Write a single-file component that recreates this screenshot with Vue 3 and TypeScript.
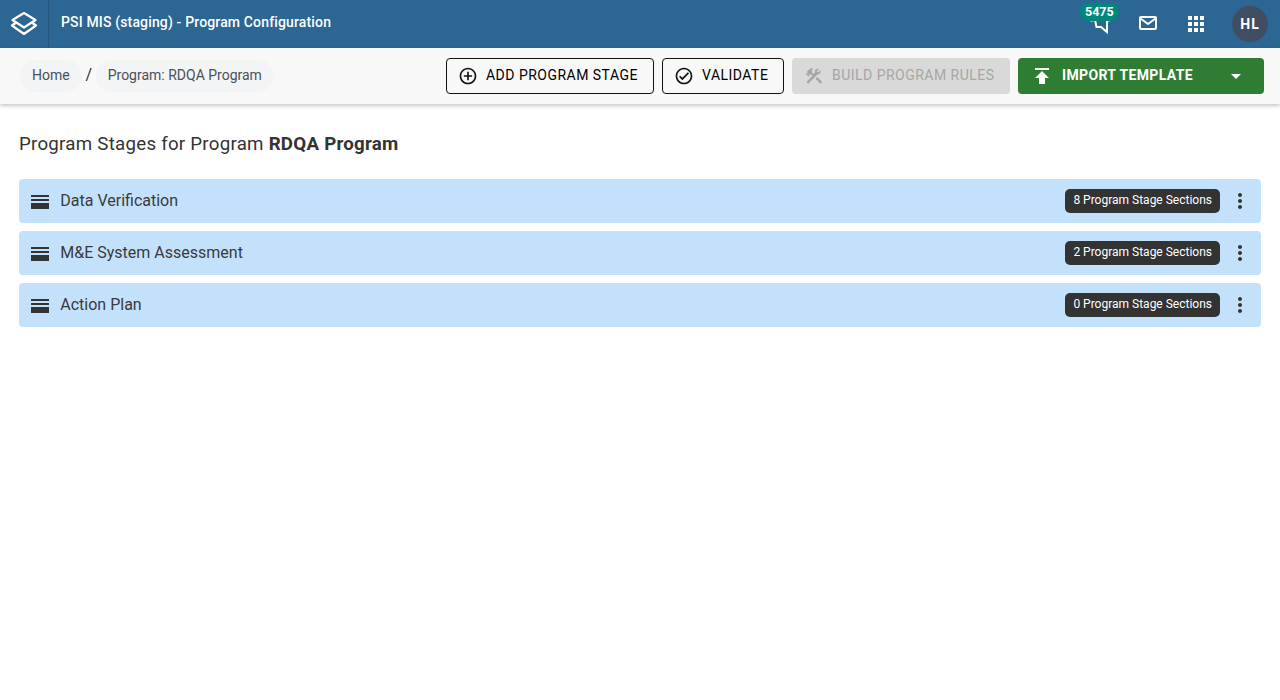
<script setup lang="ts">
const stages = [
  { name: 'Data Verification', count: 8 },
  { name: 'M&E System Assessment', count: 2 },
  { name: 'Action Plan', count: 0 },
]
</script>

<template>
  <div class="page">
    <header class="topbar">
      <div class="logo">
        <svg width="28" height="26" viewBox="0 0 28 26" fill="none" stroke="#fff" stroke-width="2.2" stroke-linejoin="round" stroke-linecap="round">
          <path d="M14 2 L25.500 9 L14 16.500 L2.500 9 Z" />
          <path d="M5.500 12 L2 14.500 L14 23 L26 14.500 L22.500 12" />
        </svg>
      </div>
      <div class="title">PSI MIS (staging) - Program Configuration</div>
      <div class="top-actions">
        <div class="chat">
          <svg class="chat-icon" width="24" height="24" viewBox="0 0 24 24" fill="none" stroke="#fff" stroke-width="2">
            <path d="M2.500 8.500 L5 8.500 M7 8 L8.500 15 L13 15 L19 20 L19 9 L22 8" />
          </svg>
          <span class="badge">5475</span>
        </div>
        <svg class="mail" width="24" height="24" viewBox="0 0 24 24" fill="none" stroke="#fff" stroke-width="2" stroke-linejoin="round">
          <rect x="4" y="6" width="16" height="12" rx="1" />
          <path d="M4.500 7.500 L12 13 L19.500 7.500" />
        </svg>
        <svg class="apps" width="24" height="24" viewBox="0 0 24 24" fill="#fff">
          <path d="M4 8h4V4H4v4zm6 12h4v-4h-4v4zm-6 0h4v-4H4v4zm0-6h4v-4H4v4zm6 0h4v-4h-4v4zm6-10v4h4V4h-4zm-6 4h4V4h-4v4zm6 6h4v-4h-4v4zm0 6h4v-4h-4v4z" />
        </svg>
        <div class="avatar">HL</div>
      </div>
    </header>

    <div class="toolbar">
      <nav class="crumbs">
        <span class="chip">Home</span>
        <span class="sep">/</span>
        <span class="chip">Program: RDQA Program</span>
      </nav>
      <div class="buttons">
        <button class="btn outline add">
          <svg width="20" height="20" viewBox="0 0 24 24" fill="#111">
            <path d="M13 7h-2v4H7v2h4v4h2v-4h4v-2h-4V7zm-1-5C6.480 2 2 6.480 2 12s4.480 10 10 10 10-4.480 10-10S17.520 2 12 2zm0 18c-4.410 0-8-3.590-8-8s3.590-8 8-8 8 3.590 8 8-3.590 8-8 8z" />
          </svg>
          <span class="label">ADD PROGRAM STAGE</span>
        </button>
        <button class="btn outline validate">
          <svg width="20" height="20" viewBox="0 0 24 24" fill="#111">
            <path d="M12 2C6.480 2 2 6.480 2 12s4.480 10 10 10 10-4.480 10-10S17.520 2 12 2zm0 18c-4.410 0-8-3.590-8-8s3.590-8 8-8 8 3.590 8 8-3.590 8-8 8zm4.590-12.420L10 14.170l-2.590-2.580L6 13l4 4 8-8-1.410-1.420z" />
          </svg>
          <span class="label">VALIDATE</span>
        </button>
        <button class="btn disabled" disabled>
          <svg width="20" height="20" viewBox="0 0 24 24" fill="#a6a6a6">
            <path d="M13.780 15.300l6 6 2.110-2.160-6-6-2.110 2.160zm3.720-5.200c-.39 0-.81-.05-1.130-.18L4.970 21.300l-2.110-2.110 7.410-7.400-1.770-1.780-.72.710-1.450-1.420v2.860l-.7.710-3.540-3.540.71-.7h2.810L3.220 7.230l3.550-3.550c1.170-1.170 3.050-1.170 4.220 0L8.870 5.800l1.410 1.410-.71.710 1.770 1.770 1.800-1.850c-.13-.32-.18-.74-.18-1.110 0-1.950 1.580-3.530 3.530-3.530.59 0 1.110.14 1.580.37l-2.680 2.680 1.500 1.500 2.680-2.680c.23.47.37 1 .37 1.560 0 1.950-1.580 3.530-3.530 3.530z" />
          </svg>
          <span class="label">BUILD PROGRAM RULES</span>
        </button>
        <button class="btn import">
          <svg width="24" height="24" viewBox="0 0 24 24" fill="#fff">
            <path d="M5 4v2h14V4H5zm0 10h4v6h6v-6h4l-7-7-7 7z" />
          </svg>
          <span class="import-label">IMPORT TEMPLATE</span>
          <svg class="caret" width="24" height="24" viewBox="0 0 24 24" fill="#fff">
            <path d="M7 10l5 5 5-5z" />
          </svg>
        </button>
      </div>
    </div>

    <main class="content">
      <h1 class="heading">Program Stages for Program <strong>RDQA Program</strong></h1>
      <ul class="list">
        <li v-for="s in stages" :key="s.name" class="row">
          <svg class="drag" width="18" height="14" viewBox="0 0 18 14" fill="#333">
            <rect x="0" y="0" width="18" height="2" />
            <rect x="0" y="4" width="18" height="2" />
            <rect x="0" y="8" width="18" height="6" />
          </svg>
          <span class="name">{{ s.name }}</span>
          <span class="count">{{ s.count }} Program Stage Sections</span>
          <svg class="more" width="24" height="24" viewBox="0 0 24 24" fill="#333">
            <path d="M12 8c1.100 0 2-.9 2-2s-.9-2-2-2-2 .9-2 2 .9 2 2 2zm0 2c-1.100 0-2 .9-2 2s.9 2 2 2 2-.9 2-2-.9-2-2-2zm0 6c-1.100 0-2 .9-2 2s.9 2 2 2 2-.9 2-2-.9-2-2-2z" />
          </svg>
        </li>
      </ul>
    </main>
  </div>
</template>

<style>
html, body { margin: 0; background: #fff; }
</style>

<style scoped>
.page {
  width: 1280px;
  height: 700px;
  overflow: hidden;
  font-family: Roboto, "Liberation Sans", sans-serif;
  color: #333;
  background: #fff;
}
.topbar {
  height: 48px;
  background: #2c6693;
  display: flex;
  align-items: center;
  color: #fff;
}
.logo {
  width: 49px;
  height: 48px;
  box-sizing: border-box;
  border-right: 1px solid #24557b;
  display: flex;
  align-items: center;
  justify-content: center;
}
.title {
  margin-left: 12px;
  font-size: 14px;
  font-weight: 500;
  letter-spacing: 0.15px;
  margin-top: -4px;
}
.top-actions {
  margin-left: auto;
  display: flex;
  align-items: center;
  padding-right: 12px;
}
.chat {
  position: relative;
  width: 24px;
  height: 24px;
}
.chat-icon { display: block; }
.badge {
  position: absolute;
  left: -8px;
  top: -9px;
  height: 18px;
  padding: 0 5px;
  min-width: 27px;
  text-align: center;
  border-radius: 9px;
  background: #00897b;
  color: #fff;
  font-size: 12.5px;
  font-weight: 700;
  line-height: 18px;
}
.mail { margin-left: 24px; margin-top: -2px; }
.apps { margin-left: 24px; }
.avatar {
  margin-left: 24px;
  width: 36px;
  height: 36px;
  border-radius: 50%;
  background: #3f4e63;
  color: #fff;
  font-size: 14px;
  font-weight: 700;
  letter-spacing: 1px;
  display: flex;
  align-items: center;
  justify-content: center;
}
.toolbar {
  height: 56px;
  box-sizing: border-box;
  background: #f8f8f8;
  box-shadow: 0 2px 4px rgba(0, 0, 0, 0.22);
  display: flex;
  align-items: center;
  justify-content: space-between;
  padding: 0 16px 0 20px;
  position: relative;
}
.crumbs {
  display: flex;
  align-items: center;
  font-size: 14px;
  color: #4a5058;
}
.chip {
  height: 32px;
  line-height: 30px;
  padding: 0 12px;
  border-radius: 16px;
  background: #f3f4f6;
}
.sep {
  width: 14px;
  text-align: center;
  font-size: 16px;
  margin-top: -3px;
  color: #333;
}
.buttons {
  display: flex;
  gap: 8px;
}
.btn {
  height: 36px;
  box-sizing: border-box;
  border-radius: 4px;
  font-family: inherit;
  font-size: 14px;
  font-weight: 400;
  letter-spacing: 0.48px;
  display: flex;
  align-items: center;
  padding: 0;
  white-space: nowrap;
}
.label { margin-top: -2px; }
.outline {
  border: 1px solid #111;
  background: transparent;
  color: #000;
  gap: 8px;
  padding-left: 11px;
}
.add { width: 208px; }
.validate { width: 122px; }
.disabled {
  width: 218px;
  border: none;
  background: #d9d9d9;
  color: #a6a6a6;
  gap: 8px;
  padding-left: 12px;
}
.import {
  width: 246px;
  border: none;
  background: #2e7d32;
  color: #fff;
  font-weight: 700;
  letter-spacing: 0.35px;
  padding-left: 12px;
}
.import-label { margin-left: 8px; margin-top: -2px; }
.caret { margin-left: auto; margin-right: 16px; }
.content { padding: 0 19px; }
.heading {
  margin: 28px 0 22px;
  height: 25px;
  line-height: 25px;
  font-size: 18.72px;
  font-weight: 400;
  letter-spacing: 0.25px;
  color: #333;
}
.heading strong { font-weight: 700; }
.list {
  list-style: none;
  margin: 0;
  padding: 0;
  display: flex;
  flex-direction: column;
  gap: 8px;
}
.row {
  height: 44px;
  border-radius: 4px;
  background: #c4e1fc;
  display: flex;
  align-items: center;
  padding: 0 9px 0 12px;
}
.drag { flex: none; margin-top: 1px; }
.name {
  margin-left: 11.3px;
  font-size: 16px;
  color: #3a3a3a;
  margin-top: -2px;
}
.count {
  margin-left: auto;
  height: 24px;
  line-height: 22px;
  padding: 0 8px;
  border-radius: 5px;
  background: #333;
  color: #fff;
  font-size: 12px;
  font-weight: 400;
}
.more { margin-left: 8px; }
</style>
